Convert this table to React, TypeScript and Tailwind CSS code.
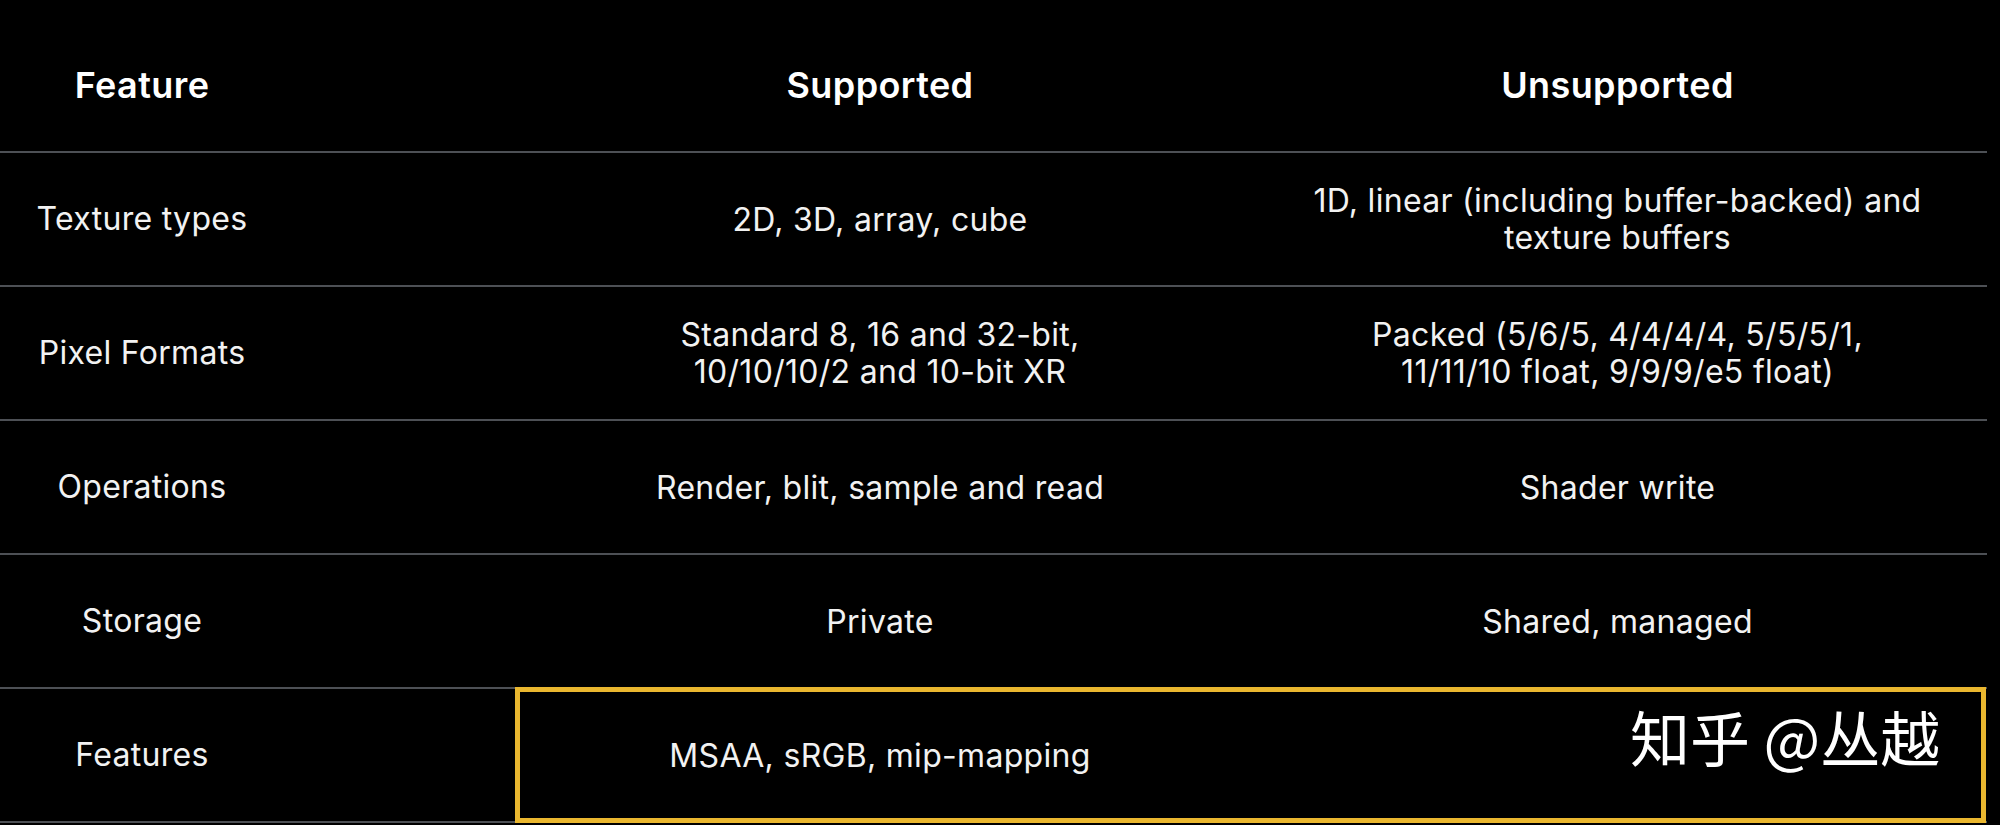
const rows = [
  {
    feature: "Texture types",
    supported: ["2D, 3D, array, cube"],
    unsupported: ["1D, linear (including buffer-backed) and", "texture buffers"],
  },
  {
    feature: "Pixel Formats",
    supported: ["Standard 8, 16 and 32-bit,", "10/10/10/2 and 10-bit XR"],
    unsupported: ["Packed (5/6/5, 4/4/4/4, 5/5/5/1,", "11/11/10 float, 9/9/9/e5 float)"],
  },
  {
    feature: "Operations",
    supported: ["Render, blit, sample and read"],
    unsupported: ["Shader write"],
  },
  {
    feature: "Storage",
    supported: ["Private"],
    unsupported: ["Shared, managed"],
  },
  {
    feature: "Features",
    supported: ["MSAA, sRGB, mip-mapping"],
    unsupported: [],
  },
];

const Lines = ({ lines }: { lines: string[] }) => (
  <div className="text-center leading-[37px] whitespace-nowrap">
    {lines.map((l) => (
      <div key={l}>{l}</div>
    ))}
  </div>
);

export default function App() {
  return (
    <div className="w-[2000px] h-[825px] bg-black text-[#f2f2f2] font-['Inter','Noto_Sans_CJK_SC',sans-serif] overflow-hidden">
      <div className="w-[1987px]">
        {/* header */}
        <div className="grid grid-cols-[512px_736px_739px] h-[153px] border-b-2 border-[#4d5055] pt-[18px] text-[36px] font-semibold tracking-[0.4px] text-white">
          <div className="w-[284px] flex items-center justify-center">Feature</div>
          <div className="flex items-center justify-center">Supported</div>
          <div className="flex items-center justify-center">Unsupported</div>
        </div>

        {rows.map((row, i) => (
          <div
            key={row.feature}
            className="relative grid grid-cols-[512px_736px_739px] h-[134px] border-b-2 border-[#4d5055] text-[32px] tracking-[0.3px]"
          >
            <div className="w-[284px] flex items-center justify-center whitespace-nowrap">{row.feature}</div>
            <div className="flex items-center justify-center">
              <Lines lines={row.supported} />
            </div>
            <div className="flex items-center justify-center">
              <Lines lines={row.unsupported} />
            </div>
            {i === rows.length - 1 && (
              <>
                <div className="absolute left-[515px] top-[-2px] w-[1471px] h-[136px] border-[5px] border-[#eab72f] pointer-events-none" />
                <div className="absolute left-[1630px] top-[17px] text-[60px] leading-none font-normal tracking-normal text-white font-['Noto_Sans_CJK_SC',sans-serif] whitespace-nowrap">
                  知乎 @丛越
                </div>
              </>
            )}
          </div>
        ))}
      </div>
    </div>
  );
}
